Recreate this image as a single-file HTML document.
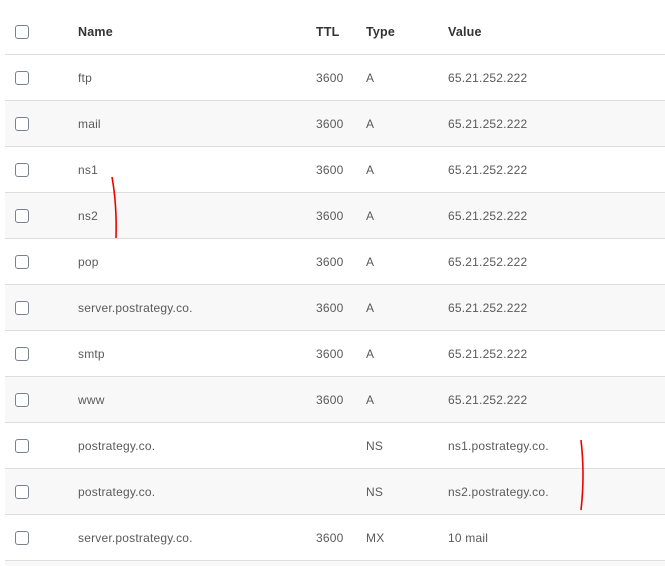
<!DOCTYPE html>
<html><head><style>
body{margin:0;width:665px;height:566px;background:#fff;font-family:"Liberation Sans",sans-serif;overflow:hidden;position:relative}
.r{position:absolute;left:5px;width:660px;height:45px;border-bottom:1px solid #ddd;font-size:12px;color:#5a5a5a;letter-spacing:0.2px}
.r.g{background:#f8f8f8}
.r span{position:absolute;top:0;line-height:46px}
.cb{position:absolute;left:10px;top:16px;width:12px;height:12px;border:1.5px solid #7b8091;border-radius:3px;background:#fff}
.h{font-weight:bold;color:#333;font-size:12.5px}
</style></head><body>
<div class="r h" style="top:9px;height:45px"><div class="cb"></div><span style="left:73px">Name</span><span style="left:311px">TTL</span><span style="left:361px">Type</span><span style="left:443px">Value</span></div>
<div class="r" style="top:55px"><div class="cb"></div><span style="left:73px">ftp</span><span style="left:311px">3600</span><span style="left:361px">A</span><span style="left:443px">65.21.252.222</span></div>
<div class="r g" style="top:101px"><div class="cb"></div><span style="left:73px">mail</span><span style="left:311px">3600</span><span style="left:361px">A</span><span style="left:443px">65.21.252.222</span></div>
<div class="r" style="top:147px"><div class="cb"></div><span style="left:73px">ns1</span><span style="left:311px">3600</span><span style="left:361px">A</span><span style="left:443px">65.21.252.222</span></div>
<div class="r g" style="top:193px"><div class="cb"></div><span style="left:73px">ns2</span><span style="left:311px">3600</span><span style="left:361px">A</span><span style="left:443px">65.21.252.222</span></div>
<div class="r" style="top:239px"><div class="cb"></div><span style="left:73px">pop</span><span style="left:311px">3600</span><span style="left:361px">A</span><span style="left:443px">65.21.252.222</span></div>
<div class="r g" style="top:285px"><div class="cb"></div><span style="left:73px">server.postrategy.co.</span><span style="left:311px">3600</span><span style="left:361px">A</span><span style="left:443px">65.21.252.222</span></div>
<div class="r" style="top:331px"><div class="cb"></div><span style="left:73px">smtp</span><span style="left:311px">3600</span><span style="left:361px">A</span><span style="left:443px">65.21.252.222</span></div>
<div class="r g" style="top:377px"><div class="cb"></div><span style="left:73px">www</span><span style="left:311px">3600</span><span style="left:361px">A</span><span style="left:443px">65.21.252.222</span></div>
<div class="r" style="top:423px"><div class="cb"></div><span style="left:73px">postrategy.co.</span><span style="left:361px">NS</span><span style="left:443px">ns1.postrategy.co.</span></div>
<div class="r g" style="top:469px"><div class="cb"></div><span style="left:73px">postrategy.co.</span><span style="left:361px">NS</span><span style="left:443px">ns2.postrategy.co.</span></div>
<div class="r" style="top:515px"><div class="cb"></div><span style="left:73px">server.postrategy.co.</span><span style="left:311px">3600</span><span style="left:361px">MX</span><span style="left:443px">10 mail</span></div>
<div style="position:absolute;left:5px;top:561px;width:660px;height:5px;background:#f8f8f8"></div>
<svg style="position:absolute;left:0;top:0" width="665" height="566">
<path d="M112 177 Q117 205 116 238" stroke="#e00" stroke-width="1.6" fill="none"/>
<path d="M581 440 Q585 475 581 510" stroke="#e00" stroke-width="1.6" fill="none"/>
</svg>
</body></html>
